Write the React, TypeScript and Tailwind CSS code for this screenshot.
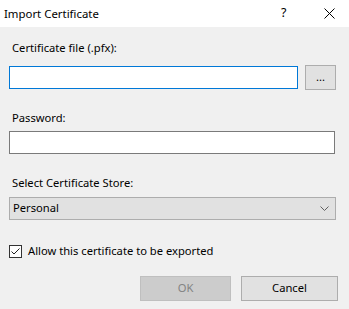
import React, { useState } from 'react';

const font = { fontFamily: '"Noto Sans", "Liberation Sans", sans-serif' };

export default function App() {
    const [allowExport, setAllowExport] = useState(true);

    return (
        <div className="w-[349px] h-[309px] bg-[#f0f0f0] text-[11.2px] text-black overflow-hidden" style={font}>
            {/* Title bar */}
            <div className="h-[27px] bg-white flex items-center">
                <span className="pl-[4px] flex-grow leading-none text-[11.4px]">Import Certificate</span>
                <span className="w-[10px] text-[12.5px] leading-none mr-[33px]">?</span>
                <svg width="11" height="11" viewBox="0 0 11 11" className="mr-[14px]">
                    <path d="M0.5 0.5 L10.5 10.5 M10.5 0.5 L0.5 10.5" stroke="#000" strokeWidth="1" />
                </svg>
            </div>

            <div className="px-[9px]">
                {/* Certificate file */}
                <div className="mt-[13px] h-[16px] leading-[16px] pl-[3px]">Certificate file (.pfx):</div>
                <div className="mt-[9px] h-[25px] flex items-center gap-[7px]">
                    <input
                        type="text"
                        className="w-[289px] h-[23px] bg-white border border-[#0078d7] outline-none px-1"
                    />
                    <button className="w-[31px] h-[25px] bg-[#e1e1e1] border border-[#adadad] flex items-center justify-center leading-none pb-[2px]">
                        ...
                    </button>
                </div>

                {/* Password */}
                <div className="mt-[20px] h-[16px] leading-[16px] pl-[3px]">Password:</div>
                <input
                    type="password"
                    className="mt-[5px] block w-[326px] h-[23px] bg-white border border-[#7a7a7a] outline-none px-1"
                />

                {/* Store */}
                <div className="mt-[21px] h-[16px] leading-[16px] pl-[3px]">Select Certificate Store:</div>
                <div className="mt-[6px] w-[327px] h-[23px] bg-[#e1e1e1] border border-[#adadad] flex items-center pl-[3px] pr-[6px]">
                    <span className="flex-grow">Personal</span>
                    <svg width="9" height="5" viewBox="0 0 9 5">
                        <path d="M0.5 0.5 L4.5 4.5 L8.5 0.5" fill="none" stroke="#606060" strokeWidth="1" />
                    </svg>
                </div>

                {/* Checkbox */}
                <label className="mt-[23px] h-[16px] flex items-center gap-[6px] cursor-default">
                    <span
                        onClick={() => setAllowExport(!allowExport)}
                        className="w-[13px] h-[13px] bg-white border border-[#333333] flex items-center justify-center"
                    >
                        {allowExport && (
                            <svg width="11" height="11" viewBox="0 0 11 11">
                                <path d="M1.5 5.5 L4 8 L9.5 2.5" fill="none" stroke="#222" strokeWidth="1" />
                            </svg>
                        )}
                    </span>
                    <span>Allow this certificate to be exported</span>
                </label>
            </div>

            {/* Buttons */}
            <div className="mt-[17px] flex justify-end gap-[10px] pr-[11px]">
                <button disabled className="w-[91px] h-[25px] bg-[#cccccc] border border-[#bfbfbf] text-[#838383]">
                    OK
                </button>
                <button className="w-[97px] h-[25px] bg-[#e1e1e1] border border-[#adadad]">
                    Cancel
                </button>
            </div>
        </div>
    );
}
